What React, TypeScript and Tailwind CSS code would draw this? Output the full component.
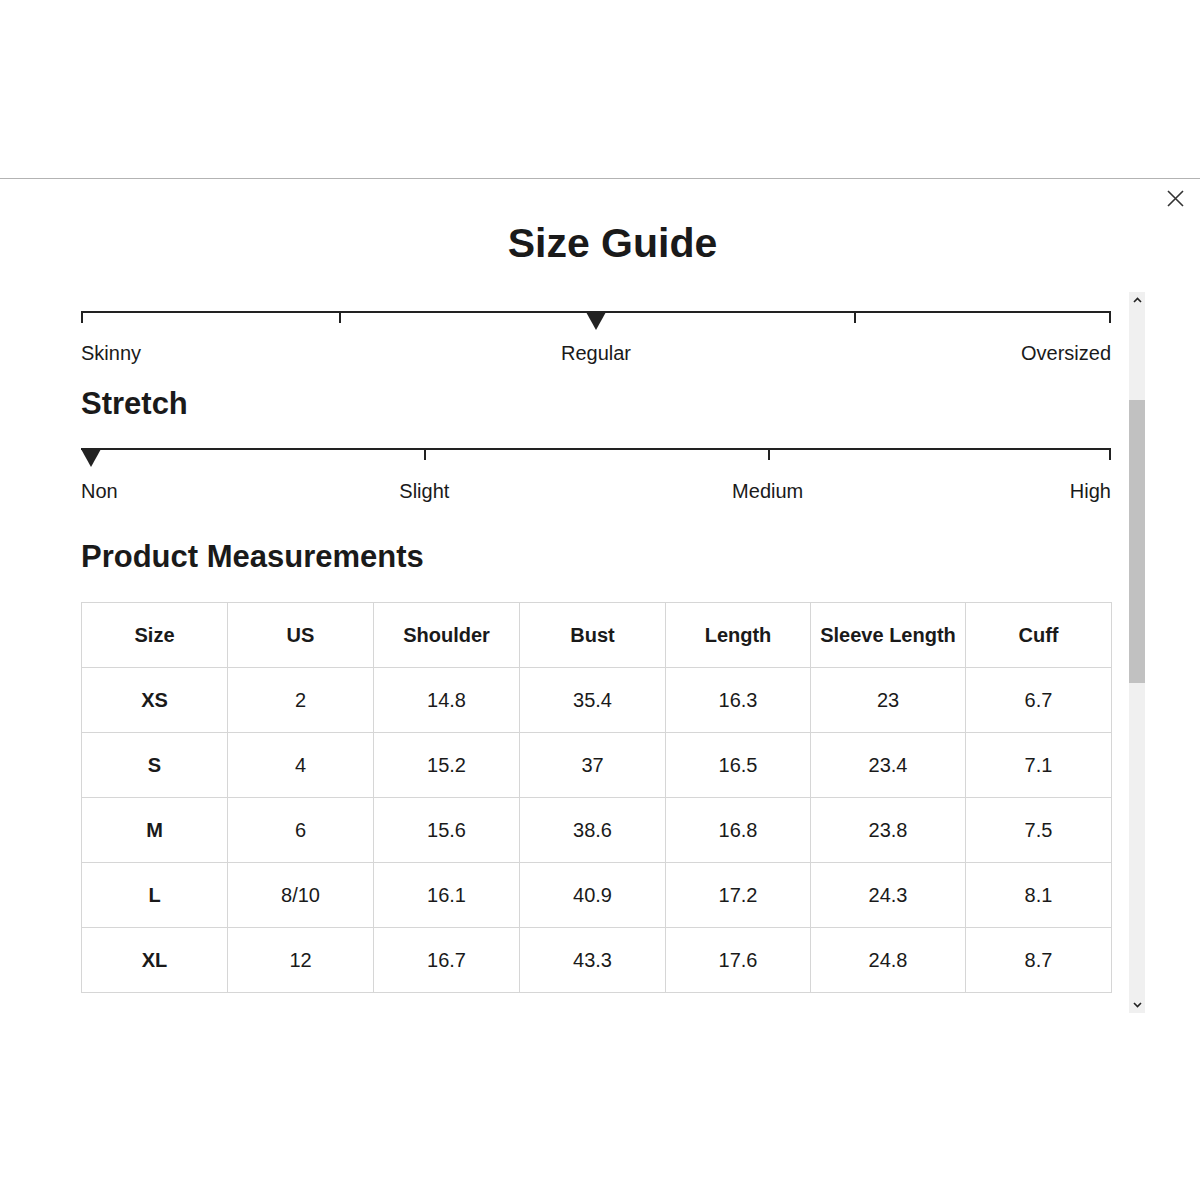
import React from 'react';

const font = { fontFamily: '"Liberation Sans", Arial, sans-serif' };

const rows = [
  ['XS', '2', '14.8', '35.4', '16.3', '23', '6.7'],
  ['S', '4', '15.2', '37', '16.5', '23.4', '7.1'],
  ['M', '6', '15.6', '38.6', '16.8', '23.8', '7.5'],
  ['L', '8/10', '16.1', '40.9', '17.2', '24.3', '8.1'],
  ['XL', '12', '16.7', '43.3', '17.6', '24.8', '8.7'],
];

const headers = ['Size', 'US', 'Shoulder', 'Bust', 'Length', 'Sleeve Length', 'Cuff'];
const widths = ['w-[146px]', 'w-[146px]', 'w-[146px]', 'w-[146px]', 'w-[145px]', 'w-[155px]', 'w-[146px]'];

const Pointer: React.FC<{ className: string }> = ({ className }) => (
  <svg className={className} width="20" height="18" viewBox="0 0 20 18">
    <polygon points="0,0 20,0 10,18" fill="#222" />
  </svg>
);

export default function App() {
  return (
    <div className="w-[1200px] h-[1200px] bg-white text-[#1a1a1a] overflow-hidden" style={font}>
      <div className="h-[178px]" />
      <div className="border-t border-[#b3b3b3]" />

      {/* header */}
      <div className="relative h-[113px]">
        <button className="absolute top-[11px] right-[16px] w-[17px] h-[17px]">
          <svg width="17" height="17" viewBox="0 0 17 17">
            <path d="M1 1L16 16M16 1L1 16" stroke="#333" strokeWidth="1.6" />
          </svg>
        </button>
        <h1 className="pt-[40px] pl-[25px] text-center text-[41px] leading-[48px] font-bold text-[#1a1a1a]">Size Guide</h1>
      </div>

      {/* scroll area */}
      <div className="h-[721px] flex">
        <div className="ml-[81px] w-[1030px] pt-[19px]">
          {/* fit */}
          <div className="relative flex border-t-2 border-[#222]">
            <div className="w-1/4 h-[10px] border-l-2 border-[#222]" />
            <div className="w-1/2 h-[10px] border-l-2 border-[#222]" />
            <div className="w-1/4 h-[10px] border-l-2 border-r-2 border-[#222]" />
            <Pointer className="absolute -top-[1px] left-1/2 -translate-x-1/2" />
          </div>
          <div className="mt-[18px] grid grid-cols-3 text-[20px] leading-[24px]">
            <span className="text-left">Skinny</span>
            <span className="text-center">Regular</span>
            <span className="text-right">Oversized</span>
          </div>

          <h2 className="mt-[21px] text-[31px] leading-[36px] font-bold">Stretch</h2>
          <div className="mt-[26px] relative flex border-t-2 border-[#222]">
            <div className="w-1/3 h-[10px]" />
            <div className="w-1/3 h-[10px] border-l-2 border-[#222]" />
            <div className="w-1/3 h-[10px] border-l-2 border-r-2 border-[#222]" />
            <Pointer className="absolute -top-[1px] left-0" />
          </div>
          <div className="mt-[19px] grid grid-cols-6 text-[20px] leading-[24px]">
            <span className="text-left">Non</span>
            <span className="col-span-2 text-center">Slight</span>
            <span className="col-span-2 text-center">Medium</span>
            <span className="text-right">High</span>
          </div>

          <h2 className="mt-[36px] text-[31px] leading-[36px] font-bold">Product Measurements</h2>
          <table className="mt-[27px] w-[1030px] table-fixed border-collapse text-[20px]">
            <colgroup>
              {widths.map((w, i) => (
                <col key={i} className={w} />
              ))}
            </colgroup>
            <thead>
              <tr className="h-[65px]">
                {headers.map((h) => (
                  <th key={h} className="border border-[#d6d6d6] font-bold text-center">{h}</th>
                ))}
              </tr>
            </thead>
            <tbody>
              {rows.map((r) => (
                <tr key={r[0]} className="h-[65px]">
                  {r.map((c, i) => (
                    <td key={i} className={`border border-[#d6d6d6] text-center ${i === 0 ? 'font-bold' : ''}`}>{c}</td>
                  ))}
                </tr>
              ))}
            </tbody>
          </table>
        </div>

        {/* scrollbar */}
        <div className="ml-[18px] w-[16px] h-full bg-[#f0f0f0] flex flex-col items-center">
          <svg className="mt-[5px]" width="9" height="6" viewBox="0 0 9 6">
            <path d="M1 5L4.5 1.5L8 5" stroke="#222" strokeWidth="1.6" fill="none" />
          </svg>
          <div className="mt-[97px] w-full h-[283px] bg-[#c1c1c1]" />
          <div className="flex-1" />
          <svg className="mb-[5px]" width="9" height="6" viewBox="0 0 9 6">
            <path d="M1 1L4.5 4.5L8 1" stroke="#222" strokeWidth="1.6" fill="none" />
          </svg>
        </div>
      </div>
    </div>
  );
}
